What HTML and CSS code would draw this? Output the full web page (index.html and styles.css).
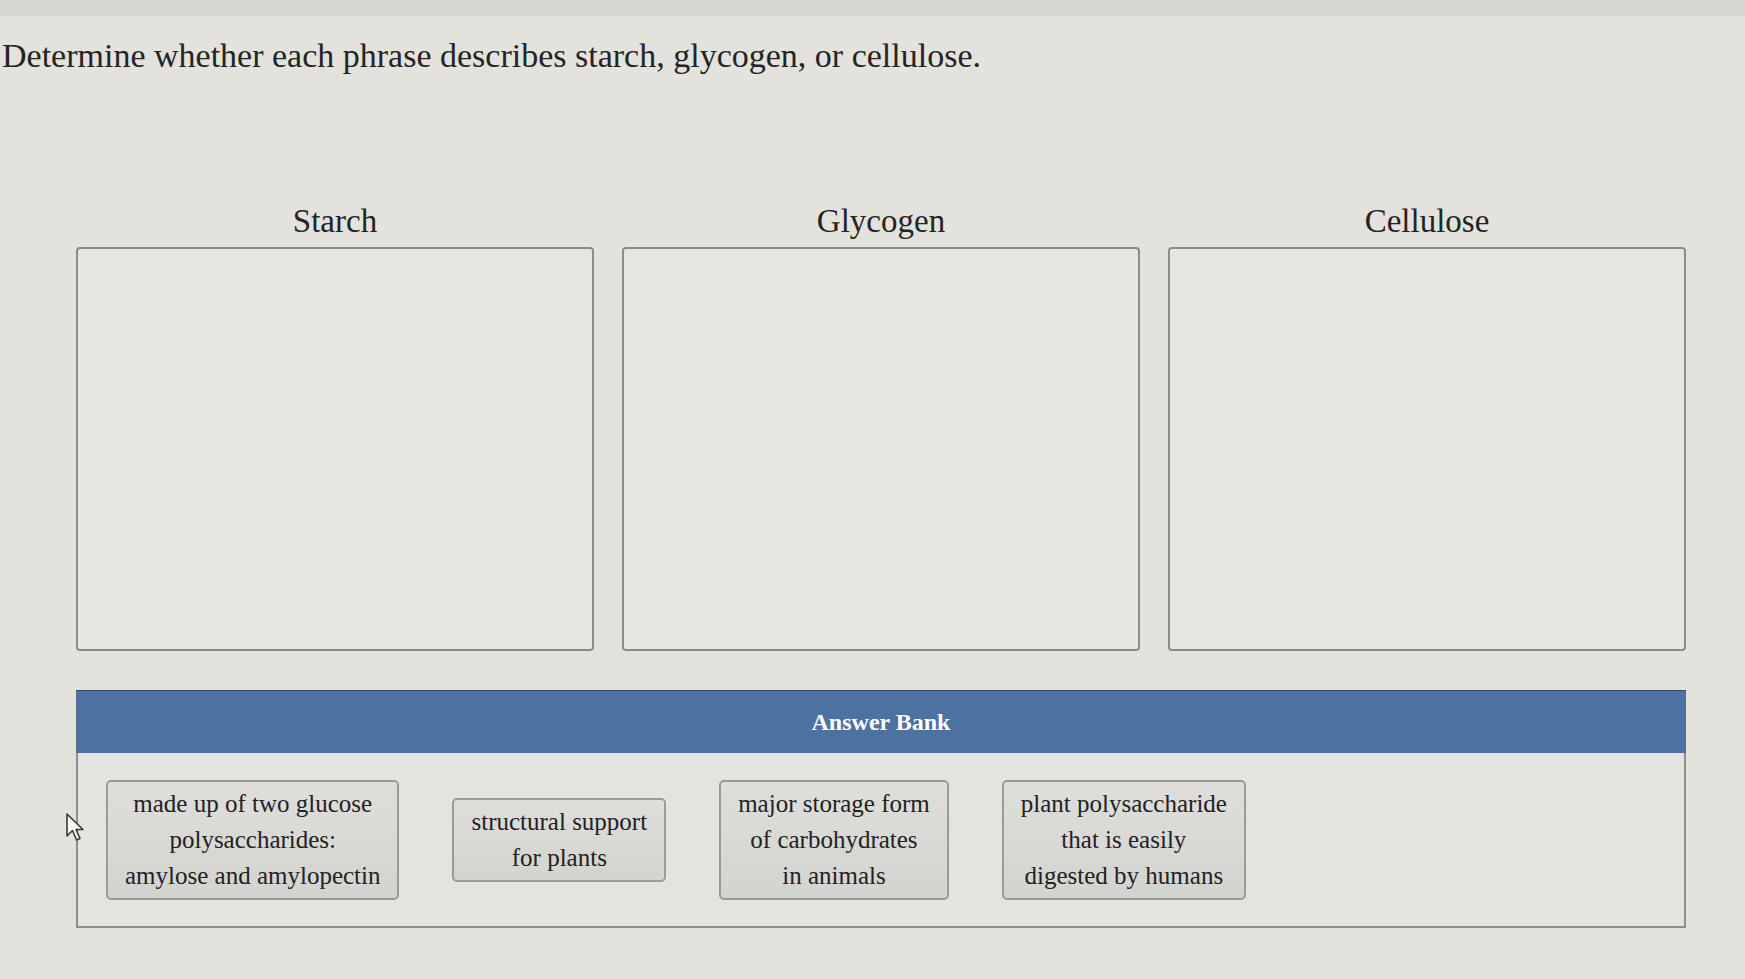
FILE: index.html
```html
<!DOCTYPE html>
<html lang="en">
<head>
    <meta charset="UTF-8">
    <meta name="viewport" content="width=device-width, initial-scale=1.0">
    <title>Carbohydrates - Sorting</title>
    <link rel="stylesheet" href="styles.css">
</head>
<body>
    <div class="topbar"></div>

    <main class="question">
        <p class="prompt">Determine whether each phrase describes starch, glycogen, or cellulose.</p>

        <div class="workspace">
            <div class="targets">
                <div class="target">
                    <h2 class="target-label">Starch</h2>
                    <div class="dropzone"></div>
                </div>
                <div class="target">
                    <h2 class="target-label">Glycogen</h2>
                    <div class="dropzone"></div>
                </div>
                <div class="target">
                    <h2 class="target-label">Cellulose</h2>
                    <div class="dropzone"></div>
                </div>
            </div>

            <section class="bank">
                <h3 class="bank-title">Answer Bank</h3>
                <div class="bank-items">
                    <div class="chip">made up of two glucose<br>polysaccharides:<br>amylose and amylopectin</div>
                    <div class="chip">structural support<br>for plants</div>
                    <div class="chip">major storage form<br>of carbohydrates<br>in animals</div>
                    <div class="chip">plant polysaccharide<br>that is easily<br>digested by humans</div>
                </div>

                <!-- mouse pointer resting beside the first item -->
                <svg class="cursor" width="22" height="32" viewBox="0 0 22 32">
                    <path d="M2 2 L2 24 L7.5 18.5 L11.5 28 L15 26.5 L11 17.5 L18 17.5 Z" fill="#f4f4f2" stroke="#3a3a3a" stroke-width="1.6" stroke-linejoin="round"/>
                </svg>
            </section>
        </div>
    </main>
</body>
</html>
```

FILE: styles.css
```css
body {
    margin: 0;
    background: #e3e2dd;
    font-family: "Liberation Serif", "Times New Roman", serif;
    color: #222;
}
.topbar {
    height: 16px;
    background: #d6d5d1;
}
.question {
    padding: 20px 0 0 2px;
}
.prompt {
    margin: 0;
    font-size: 34px;
    line-height: 40px;
    color: #242424;
}
.workspace {
    width: 1610px;
    margin: 125px 0 0 74px;
}
.targets {
    display: grid;
    grid-template-columns: repeat(3, 1fr);
    gap: 28px;
}
.target-label {
    margin: 0 0 6px;
    font-size: 33px;
    font-weight: normal;
    line-height: 40px;
    text-align: center;
    color: #242424;
}
.dropzone {
    height: 400px;
    background: #e6e5e1;
    border: 2px solid #8b8b89;
    border-radius: 4px;
}
.bank {
    position: relative;
    margin-top: 39px;
}
.bank-title {
    margin: 0;
    height: 63px;
    line-height: 62px;
    text-align: center;
    font-size: 24px;
    font-weight: bold;
    color: #fff;
    background: #4d71a1;
    border-top: 1px solid #2f4a70;
    box-sizing: border-box;
}
.bank-items {
    display: flex;
    align-items: center;
    gap: 53px;
    height: 173px;
    padding: 0 28px;
    background: #e4e3df;
    border: 2px solid #8e8e8c;
    border-top: none;
}
.chip {
    padding: 4px 17px;
    font-size: 25px;
    line-height: 36px;
    text-align: center;
    color: #222;
    background: linear-gradient(#dfdedb, #d3d3d0);
    border: 2px solid #9a9a98;
    border-radius: 5px;
}
.cursor {
    position: absolute;
    left: -11px;
    top: 122px;
}
```
